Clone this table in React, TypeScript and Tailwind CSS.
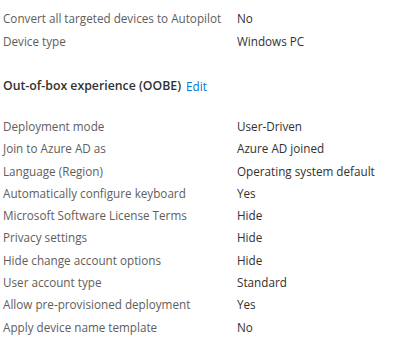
import React from "react";

const top = [
  ["Convert all targeted devices to Autopilot", "No"],
  ["Device type", "Windows PC"],
];

const oobe = [
  ["Deployment mode", "User-Driven"],
  ["Join to Azure AD as", "Azure AD joined"],
  ["Language (Region)", "Operating system default"],
  ["Automatically configure keyboard", "Yes"],
  ["Microsoft Software License Terms", "Hide"],
  ["Privacy settings", "Hide"],
  ["Hide change account options", "Hide"],
  ["User account type", "Standard"],
  ["Allow pre-provisioned deployment", "Yes"],
  ["Apply device name template", "No"],
];

function Row({ label, value }: { label: string; value: string }) {
  return (
    <div className="flex h-[22.3px] items-center whitespace-nowrap">
      <div className="w-[234px] shrink-0 text-[#605e5c]">{label}</div>
      <div className="text-[#323130]">{value}</div>
    </div>
  );
}

export default function App() {
  return (
    <div
      className="w-[400px] h-[353px] bg-white pl-[3px] pt-[8px] text-[11.7px] overflow-hidden"
      style={{ fontFamily: '"Open Sans", "Noto Sans", sans-serif' }}
    >
      {top.map(([l, v]) => (
        <Row key={l} label={l} value={v} />
      ))}
      <div className="mt-[23px] flex h-[22px] items-center gap-[5px] whitespace-nowrap">
        <span className="font-semibold text-[#323130] text-[12.3px]">Out-of-box experience (OOBE)</span>
        <span className="text-[#0078d4]">Edit</span>
      </div>
      <div className="mt-[18px]">
        {oobe.map(([l, v]) => (
          <Row key={l} label={l} value={v} />
        ))}
      </div>
    </div>
  );
}
